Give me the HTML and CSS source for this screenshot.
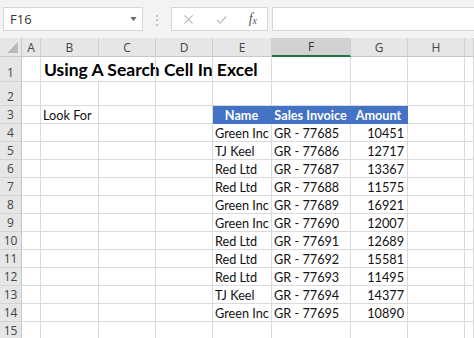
FILE: index.html
```html
<!DOCTYPE html>
<html>
<head>
    <title>Using A Search Cell In Excel</title>
    <meta charset="UTF-8">
    <link rel="stylesheet" href="styles.css">
</head>
<body>
    <div class="formula-bar">
        <div class="name-box">
            <span>F16</span>
            <svg class="caret" viewBox="0 0 8 5"><path d="M0 0h8L4 5z"/></svg>
        </div>
        <div class="grip">&#8942;</div>
        <div class="fx-box">
            <svg class="icon" viewBox="0 0 12 12"><path d="M1.5 1.5l9 9M10.5 1.5l-9 9"/></svg>
            <svg class="icon" viewBox="0 0 12 12"><path d="M1 6.5l3.5 3.5L11 2.5"/></svg>
            <span class="fx">f<sub>x</sub></span>
        </div>
        <div class="formula-input"></div>
    </div>
    <div class="sheet">
        <div class="corner"><span class="tri"></span></div>
        <div class="col-head">A</div>
        <div class="col-head">B</div>
        <div class="col-head">C</div>
        <div class="col-head">D</div>
        <div class="col-head">E</div>
        <div class="col-head active">F</div>
        <div class="col-head">G</div>
        <div class="col-head">H</div>
        <div class="col-head"></div>

        <div class="row-head">1</div>
        <div class="cell"></div>
        <div class="cell title">Using A Search Cell In Excel</div>
        <div class="cell"></div><div class="cell"></div><div class="cell"></div><div class="cell"></div><div class="cell"></div><div class="cell"></div><div class="cell"></div>

        <div class="row-head">2</div>
        <div class="cell"></div><div class="cell"></div><div class="cell"></div><div class="cell"></div><div class="cell"></div><div class="cell"></div><div class="cell"></div><div class="cell"></div><div class="cell"></div>

        <div class="row-head">3</div>
        <div class="cell"></div>
        <div class="cell">Look For</div>
        <div class="cell"></div><div class="cell"></div>
        <div class="cell th">Name</div>
        <div class="cell th">Sales Invoice</div>
        <div class="cell th">Amount</div>
        <div class="cell"></div><div class="cell"></div>

        <div class="row-head">4</div>
        <div class="cell"></div><div class="cell"></div><div class="cell"></div><div class="cell"></div>
        <div class="cell">Green Inc</div><div class="cell">GR - 77685</div><div class="cell num">10451</div>
        <div class="cell"></div><div class="cell"></div>

        <div class="row-head">5</div>
        <div class="cell"></div><div class="cell"></div><div class="cell"></div><div class="cell"></div>
        <div class="cell">TJ Keel</div><div class="cell">GR - 77686</div><div class="cell num">12717</div>
        <div class="cell"></div><div class="cell"></div>

        <div class="row-head">6</div>
        <div class="cell"></div><div class="cell"></div><div class="cell"></div><div class="cell"></div>
        <div class="cell">Red Ltd</div><div class="cell">GR - 77687</div><div class="cell num">13367</div>
        <div class="cell"></div><div class="cell"></div>

        <div class="row-head">7</div>
        <div class="cell"></div><div class="cell"></div><div class="cell"></div><div class="cell"></div>
        <div class="cell">Red Ltd</div><div class="cell">GR - 77688</div><div class="cell num">11575</div>
        <div class="cell"></div><div class="cell"></div>

        <div class="row-head">8</div>
        <div class="cell"></div><div class="cell"></div><div class="cell"></div><div class="cell"></div>
        <div class="cell">Green Inc</div><div class="cell">GR - 77689</div><div class="cell num">16921</div>
        <div class="cell"></div><div class="cell"></div>

        <div class="row-head">9</div>
        <div class="cell"></div><div class="cell"></div><div class="cell"></div><div class="cell"></div>
        <div class="cell">Green Inc</div><div class="cell">GR - 77690</div><div class="cell num">12007</div>
        <div class="cell"></div><div class="cell"></div>

        <div class="row-head">10</div>
        <div class="cell"></div><div class="cell"></div><div class="cell"></div><div class="cell"></div>
        <div class="cell">Red Ltd</div><div class="cell">GR - 77691</div><div class="cell num">12689</div>
        <div class="cell"></div><div class="cell"></div>

        <div class="row-head">11</div>
        <div class="cell"></div><div class="cell"></div><div class="cell"></div><div class="cell"></div>
        <div class="cell">Red Ltd</div><div class="cell">GR - 77692</div><div class="cell num">15581</div>
        <div class="cell"></div><div class="cell"></div>

        <div class="row-head">12</div>
        <div class="cell"></div><div class="cell"></div><div class="cell"></div><div class="cell"></div>
        <div class="cell">Red Ltd</div><div class="cell">GR - 77693</div><div class="cell num">11495</div>
        <div class="cell"></div><div class="cell"></div>

        <div class="row-head">13</div>
        <div class="cell"></div><div class="cell"></div><div class="cell"></div><div class="cell"></div>
        <div class="cell">TJ Keel</div><div class="cell">GR - 77694</div><div class="cell num">14377</div>
        <div class="cell"></div><div class="cell"></div>

        <div class="row-head">14</div>
        <div class="cell"></div><div class="cell"></div><div class="cell"></div><div class="cell"></div>
        <div class="cell">Green Inc</div><div class="cell">GR - 77695</div><div class="cell num">10890</div>
        <div class="cell"></div><div class="cell"></div>

        <div class="row-head">15</div>
        <div class="cell"></div><div class="cell"></div><div class="cell"></div><div class="cell"></div><div class="cell"></div><div class="cell"></div><div class="cell"></div><div class="cell"></div><div class="cell"></div>
    </div>
</body>
</html>
```

FILE: styles.css
```css
* {
    box-sizing: border-box;
}
body {
    margin: 0;
    width: 474px;
    height: 338px;
    overflow: hidden;
    background: #fff;
    font-family: Lato, "Liberation Sans", sans-serif;
}
.formula-bar {
    display: flex;
    align-items: stretch;
    height: 38px;
    padding: 7px 0 7px 3px;
    background: #f3f3f3;
}
.name-box {
    width: 140px;
    display: flex;
    align-items: center;
    justify-content: space-between;
    padding: 0 5px 0 6px;
    background: #fff;
    border: 1px solid #d6d6d6;
    font-family: "Open Sans", sans-serif;
    font-size: 13px;
    color: #333;
}
.caret {
    width: 7px;
    height: 4px;
    fill: #666;
}
.grip {
    width: 28px;
    display: flex;
    align-items: center;
    justify-content: center;
    color: #b5b5b5;
    font-size: 14px;
}
.fx-box {
    width: 97px;
    display: flex;
    align-items: center;
    justify-content: space-between;
    padding: 0 10px 0 11px;
    background: #fff;
    border: 1px solid #d6d6d6;
}
.icon {
    width: 11px;
    height: 11px;
    fill: none;
    stroke: #b9b9b9;
    stroke-width: 1.3;
}
.fx {
    font-family: "Liberation Serif", serif;
    font-style: italic;
    font-size: 14px;
    color: #555;
}
.fx sub {
    font-size: 10px;
    vertical-align: -1px;
}
.formula-input {
    flex-grow: 1;
    margin-left: 4px;
    background: #fff;
    border: 1px solid #d6d6d6;
    border-right: none;
}
.sheet {
    display: grid;
    grid-template-columns: 22px 19px 58px 57px 57px 59px 79px 57px 57px 1fr;
    grid-template-rows: 19px 25px 24px repeat(13, 18px);
}
.corner {
    position: relative;
    background: #e6e6e6;
    border-right: 1px solid #c9c9c9;
    border-bottom: 1px solid #c9c9c9;
}
.tri {
    position: absolute;
    right: 3px;
    bottom: 3px;
    width: 0;
    height: 0;
    border-left: 11px solid transparent;
    border-bottom: 11px solid #b9b9b9;
}
.col-head {
    display: flex;
    align-items: center;
    justify-content: center;
    background: #e6e6e6;
    border-right: 1px solid #cfcfcf;
    border-bottom: 1px solid #c9c9c9;
    font-family: "Open Sans", sans-serif;
    font-size: 12px;
    color: #444;
}
.col-head.active {
    background: #d2d2d2;
    border-bottom: 2px solid #217346;
    color: #333;
}
.row-head {
    display: flex;
    align-items: flex-end;
    justify-content: center;
    background: #e6e6e6;
    border-right: 1px solid #c9c9c9;
    border-bottom: 1px solid #d4d4d4;
    font-family: "Open Sans", sans-serif;
    font-size: 12px;
    color: #444;
}
.cell {
    display: flex;
    align-items: flex-end;
    padding: 0 3px 0 2px;
    border-right: 1px solid #dadada;
    border-bottom: 1px solid #dadada;
    font-size: 12.7px;
    color: #111;
    white-space: nowrap;
    line-height: 16px;
}
.title {
    font-size: 17.5px;
    font-weight: bold;
    line-height: 22px;
    padding-left: 3px;
    border-right: none;
    color: #000;
}
.th {
    justify-content: center;
    background: #4472c4;
    border-color: #4472c4;
    color: #fff;
    font-weight: bold;
}
.num {
    justify-content: flex-end;
}
```
